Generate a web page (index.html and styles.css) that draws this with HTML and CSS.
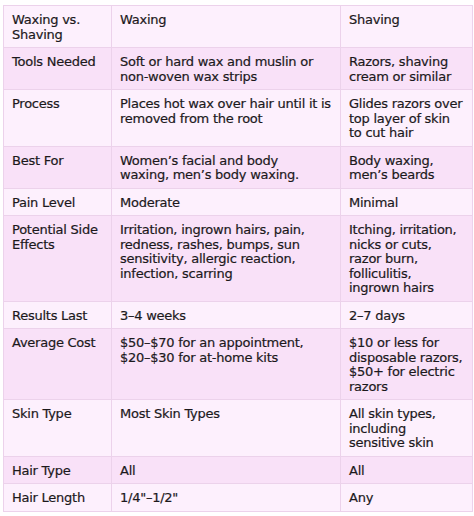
FILE: index.html
```html
<!DOCTYPE html>
<html lang="en">
<head>
<meta charset="utf-8">
<title>Waxing vs. Shaving</title>
<link rel="stylesheet" href="styles.css">
</head>
<body>
<table class="compare">
  <colgroup>
    <col class="c1">
    <col class="c2">
    <col class="c3">
  </colgroup>
  <tr class="light">
    <td>Waxing vs.<br>Shaving</td>
    <td>Waxing</td>
    <td>Shaving</td>
  </tr>
  <tr class="dark">
    <td>Tools Needed</td>
    <td>Soft or hard wax and muslin or<br>non-woven wax strips</td>
    <td>Razors, shaving<br>cream or similar</td>
  </tr>
  <tr class="light">
    <td>Process</td>
    <td>Places hot wax over hair until it is<br>removed from the root</td>
    <td>Glides razors over<br>top layer of skin<br>to cut hair</td>
  </tr>
  <tr class="dark">
    <td>Best For</td>
    <td>Women’s facial and body<br>waxing, men’s body waxing.</td>
    <td>Body waxing,<br>men’s beards</td>
  </tr>
  <tr class="light">
    <td>Pain Level</td>
    <td>Moderate</td>
    <td>Minimal</td>
  </tr>
  <tr class="dark">
    <td>Potential Side<br>Effects</td>
    <td>Irritation, ingrown hairs, pain,<br>redness, rashes, bumps, sun<br>sensitivity, allergic reaction,<br>infection, scarring</td>
    <td>Itching, irritation,<br>nicks or cuts,<br>razor burn,<br>folliculitis,<br>ingrown hairs</td>
  </tr>
  <tr class="light">
    <td>Results Last</td>
    <td>3–4 weeks</td>
    <td>2–7 days</td>
  </tr>
  <tr class="dark">
    <td>Average Cost</td>
    <td>$50–$70 for an appointment,<br>$20–$30 for at-home kits</td>
    <td>$10 or less for<br>disposable razors,<br>$50+ for electric<br>razors</td>
  </tr>
  <tr class="light">
    <td>Skin Type</td>
    <td>Most Skin Types</td>
    <td>All skin types,<br>including<br>sensitive skin</td>
  </tr>
  <tr class="dark">
    <td>Hair Type</td>
    <td>All</td>
    <td>All</td>
  </tr>
  <tr class="light">
    <td>Hair Length</td>
    <td>1/4"–1/2"</td>
    <td>Any</td>
  </tr>
</table>
</body>
</html>
```

FILE: styles.css
```css
html, body {
  margin: 0;
  padding: 0;
  background: #ffffff;
}

body {
  padding: 5px 0 0 3px;
  font-family: "DejaVu Sans", "Liberation Sans", sans-serif;
  font-size: 13px;
  letter-spacing: -0.25px;
  line-height: 14.5px;
  color: #1c191c;
  -webkit-text-stroke: 0.2px #1c191c;
}

.compare {
  border-collapse: collapse;
  table-layout: fixed;
  width: 469px;
  border: 1px solid #dccbdb;
}

.c1 { width: 108px; }
.c2 { width: 229px; }
.c3 { width: 132px; }

.compare td {
  border: 1px solid #ecd2eb;
  padding: 7px 8px 5px 8px;
  vertical-align: top;
  white-space: nowrap;
  overflow: hidden;
}

.light { background: #fdf0fd; }
.dark { background: #f9e1f8; }
```
